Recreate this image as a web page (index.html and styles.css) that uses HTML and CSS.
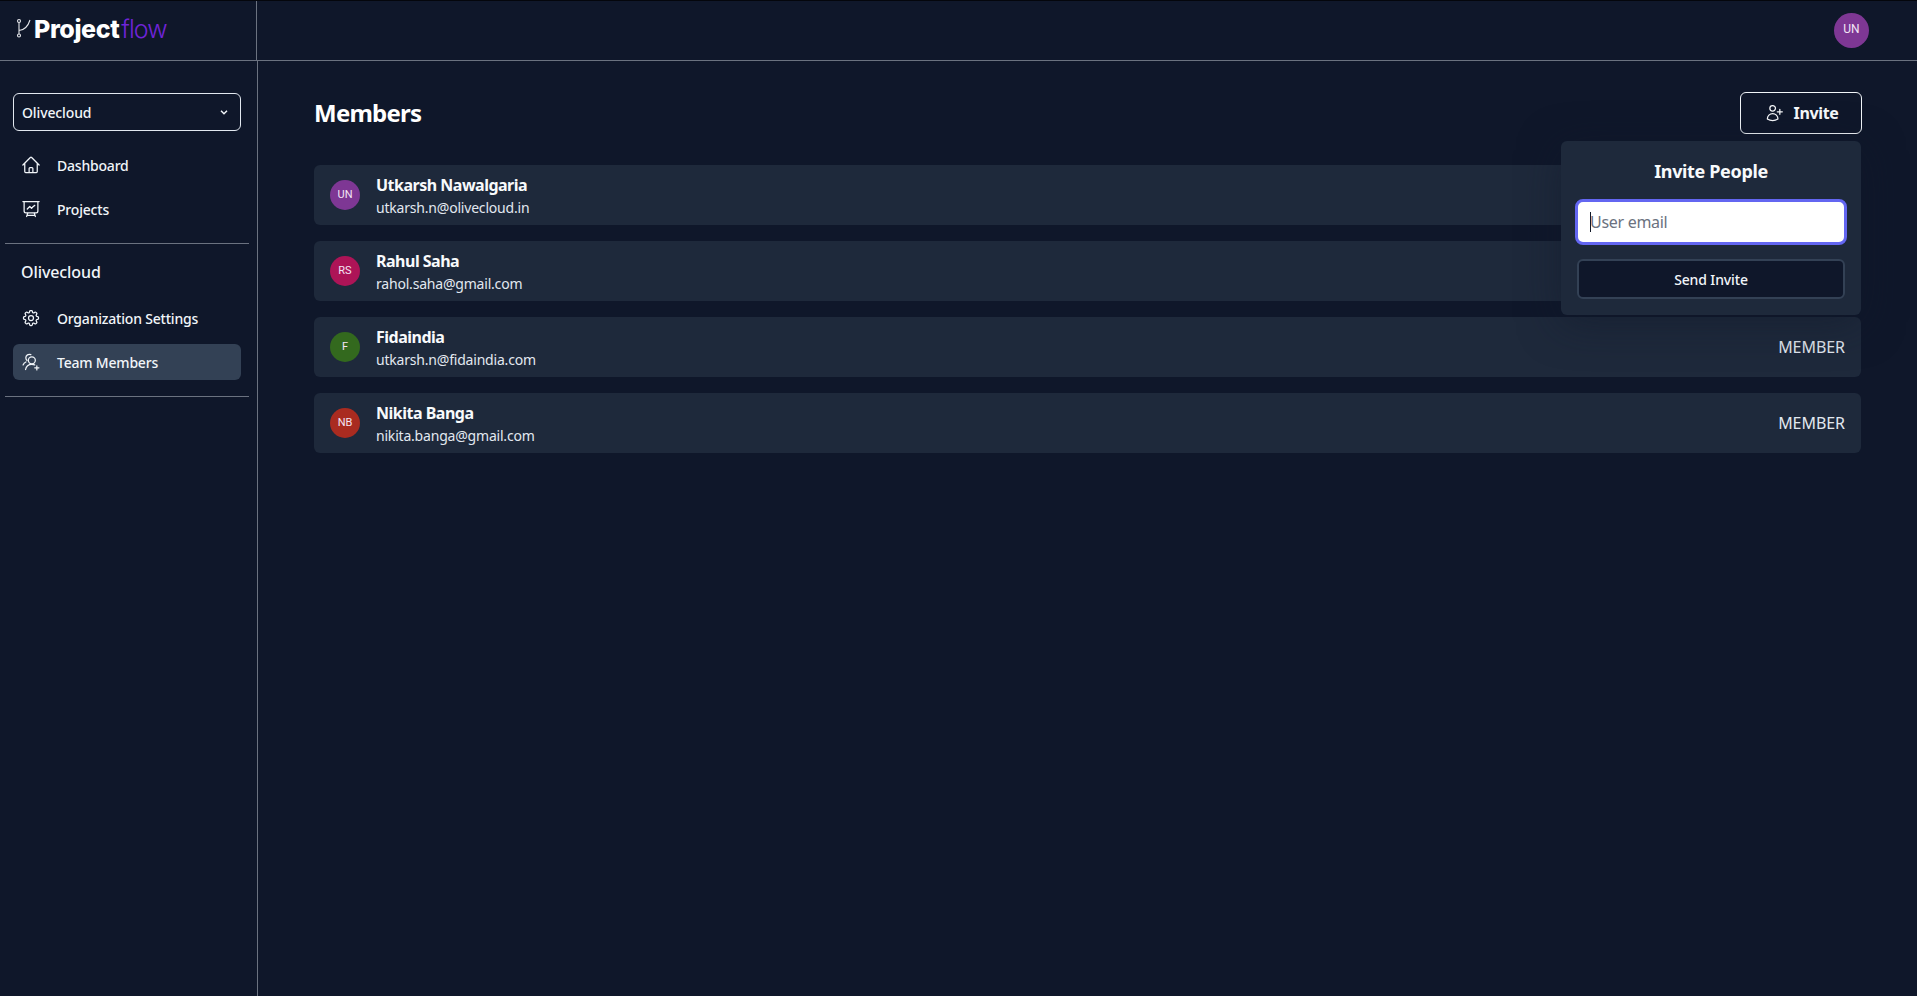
FILE: index.html
```html
<!DOCTYPE html>
<html lang="en">
<head>
<meta charset="utf-8">
<title>Members - Projectflow</title>
<link rel="stylesheet" href="styles.css">
</head>
<body>
<header class="topbar">
  <div class="brand">
    <svg class="brand-icon" viewBox="0 0 16 20" fill="none" stroke="currentColor" stroke-width="1.1"><circle cx="3" cy="3" r="1.5"/><circle cx="3" cy="17.5" r="1.5"/><path d="M3 4.5V16M3 12.500c5 -.5 9 -4 11-10.500"/></svg>
    <span class="brand-a">Project</span><span class="brand-b">flow</span>
  </div>
  <div class="topbar-right"><span class="avatar avatar-top purple">UN</span></div>
</header>
<div class="layout">
  <aside class="sidebar">
    <div class="select">Olivecloud
      <svg class="chev" viewBox="0 0 20 20" fill="none" stroke="currentColor" stroke-width="2.4"><path d="M5 8l5 5 5-5"/></svg>
    </div>
    <nav class="nav">
      <a class="nav-item"><svg class="nav-icon" viewBox="0 0 24 24" fill="none" stroke="currentColor" stroke-width="1.5" stroke-linecap="round" stroke-linejoin="round"><path d="M2.25 12l8.954-8.955c.44-.439 1.152-.439 1.591 0L21.75 12M4.5 9.75v10.125c0 .621.504 1.125 1.125 1.125H9.75v-4.875c0-.621.504-1.125 1.125-1.125h2.25c.621 0 1.125.504 1.125 1.125V21h4.125c.621 0 1.125-.504 1.125-1.125V9.75M8.25 21h8.25"/></svg>Dashboard</a>
      <a class="nav-item"><svg class="nav-icon" viewBox="0 0 24 24" fill="none" stroke="currentColor" stroke-width="1.5" stroke-linecap="round" stroke-linejoin="round"><path d="M3.75 3v11.25A2.25 2.25 0 006 16.5h2.25M3.75 3h-1.5m1.5 0h16.5m0 0h1.5m-1.5 0v11.25A2.25 2.25 0 0118 16.5h-2.25m-7.5 0h7.5m-7.5 0l-1 3m8.5-3l1 3m0 0l.5 1.5m-.5-1.5h-9.5m0 0l-.5 1.5m.75-9l3-3 2.148 2.148A12.061 12.061 0 0116.5 7.605"/></svg>Projects</a>
    </nav>
    <hr class="rule">
    <div class="org-name">Olivecloud</div>
    <nav class="nav">
      <a class="nav-item"><svg class="nav-icon" viewBox="0 0 24 24" fill="none" stroke="currentColor" stroke-width="1.5" stroke-linecap="round" stroke-linejoin="round"><path d="M10.343 3.94c.09-.542.56-.94 1.11-.94h1.093c.55 0 1.02.398 1.11.94l.149.894c.07.424.384.764.78.93.398.164.855.142 1.205-.108l.737-.527a1.125 1.125 0 011.45.12l.773.774c.39.389.44 1.002.12 1.45l-.527.737c-.25.35-.272.806-.107 1.204.165.397.505.71.93.78l.893.15c.543.09.94.56.94 1.109v1.094c0 .55-.397 1.02-.94 1.11l-.893.149c-.425.07-.765.383-.93.78-.165.398-.143.854.107 1.204l.527.738c.32.447.269 1.06-.12 1.45l-.774.773a1.125 1.125 0 01-1.449.12l-.738-.527c-.35-.25-.806-.272-1.203-.107-.397.165-.71.505-.781.929l-.149.894c-.09.542-.56.94-1.11.94h-1.094c-.55 0-1.019-.398-1.11-.94l-.148-.894c-.071-.424-.384-.764-.781-.93-.398-.164-.854-.142-1.204.108l-.738.527c-.447.32-1.06.269-1.45-.12l-.773-.774a1.125 1.125 0 01-.12-1.45l.527-.737c.25-.35.273-.806.108-1.204-.165-.397-.505-.71-.93-.78l-.894-.15c-.542-.09-.94-.56-.94-1.109v-1.094c0-.55.398-1.02.94-1.11l.894-.149c.424-.07.765-.383.93-.78.165-.398.143-.854-.107-1.204l-.527-.738a1.125 1.125 0 01.12-1.45l.773-.773a1.125 1.125 0 011.45-.12l.737.527c.35.25.807.272 1.204.107.397-.165.71-.505.78-.929l.15-.894z"/><path d="M15 12a3 3 0 11-6 0 3 3 0 016 0z"/></svg>Organization Settings</a>
      <a class="nav-item active"><svg class="nav-icon" viewBox="0 0 24 24" fill="none" stroke="currentColor" stroke-width="1.5" stroke-linecap="round" stroke-linejoin="round"><circle cx="13" cy="10" r="4.2"/><path d="M5.5 21c.6-3.8 3.6-6.3 7.5-6.3 1.3 0 2.4.3 3.4.8M19 16.5v5M16.5 19h5M11.8 3.2A4.2 4.2 0 0 0 5.8 7c0 1.3.5 2.4 1.4 3.2M2.500 15.500c.6-1.600 1.800-2.900 3.400-3.500"/></svg>Team Members</a>
    </nav>
    <hr class="rule">
  </aside>
  <main class="main">
    <div class="main-head">
      <h1 class="title">Members</h1>
      <button class="invite-btn" type="button"><svg class="invite-icon" viewBox="0 0 24 24" fill="none" stroke="currentColor" stroke-width="1.5" stroke-linecap="round" stroke-linejoin="round"><path d="M19 7.5v3m0 0v3m0-3h3m-3 0h-3m-2.25-4.125a3.375 3.375 0 11-6.75 0 3.375 3.375 0 016.75 0zM4 19.235v-.11a6.375 6.375 0 0112.75 0v.109A12.318 12.318 0 0110.374 21c-2.331 0-4.512-.645-6.374-1.766z"/></svg>Invite</button>
      <div class="popover">
        <div class="popover-title">Invite People</div>
        <div class="fake-input"><span class="caret"></span>User email</div>
        <button class="send-btn" type="button">Send Invite</button>
      </div>
    </div>
    <ul class="members">
      <li class="member"><span class="avatar purple">UN</span><div class="info"><div class="name">Utkarsh Nawalgaria</div><div class="email">utkarsh.n@olivecloud.in</div></div><span class="role">OWNER</span></li>
      <li class="member"><span class="avatar pink">RS</span><div class="info"><div class="name">Rahul Saha</div><div class="email">rahol.saha@gmail.com</div></div><span class="role">MEMBER</span></li>
      <li class="member"><span class="avatar green">F</span><div class="info"><div class="name">Fidaindia</div><div class="email">utkarsh.n@fidaindia.com</div></div><span class="role">MEMBER</span></li>
      <li class="member"><span class="avatar red">NB</span><div class="info"><div class="name">Nikita Banga</div><div class="email">nikita.banga@gmail.com</div></div><span class="role">MEMBER</span></li>
    </ul>
  </main>
</div>
</body>
</html>
```
FILE: styles.css
```css
* { box-sizing: border-box; }
html, body { height: 100%; }
body {
  margin: 0;
  background: #0f172a;
  color: #f1f5f9;
  font-family: "Noto Sans", "Liberation Sans", sans-serif;
  display: flex;
  flex-direction: column;
  overflow: hidden;
}
.topbar {
  height: 61px;
  flex: none;
  display: flex;
  border-top: 1px solid #04060c;
  border-bottom: 1px solid #6b7280;
}
.brand {
  width: 257px;
  border-right: 1px solid #6b7280;
  display: flex;
  align-items: center;
  padding: 0 0 4px 16px;
}
.brand-icon { width: 16px; height: 20px; color: #e5e7eb; margin-right: 2px; margin-top: -2px; flex: none; }
.brand-a { font-family: Inter, sans-serif; font-weight: 800; font-size: 25px; letter-spacing: -0.4px; color: #fff; }
.brand-b { font-family: Inter, sans-serif; font-weight: 300; font-size: 25px; letter-spacing: -1px; color: #7024d8; margin-left: 2px; }
.topbar-right { flex: 1; display: flex; justify-content: flex-end; align-items: center; padding: 0 48px 0 0; }
.layout { flex: 1; display: flex; min-height: 0; }
.sidebar {
  width: 258px;
  flex: none;
  border-right: 1px solid #6b7280;
  padding: 32px 7px 0 5px;
}
.select {
  margin: 0 0 0 8px;
  width: 228px;
  height: 38px;
  border: 1px solid #e2e8f0;
  border-radius: 6px;
  display: flex;
  align-items: center;
  justify-content: space-between;
  padding: 0 10px 0 8px;
  font-size: 14px;
  font-weight: 500;
  letter-spacing: -0.12px;
}
.chev { width: 12px; height: 12px; }
.nav { display: flex; flex-direction: column; gap: 8px; margin-top: 16px; }
.nav-item {
  display: flex;
  align-items: center;
  margin-left: 8px;
  width: 228px;
  height: 36px;
  padding-left: 8px;
  border-radius: 6px;
  font-size: 14px;
  font-weight: 500;
  letter-spacing: -0.2px;
}
.nav-item.active { background: #334155; }
.nav-icon { width: 20px; height: 20px; margin-right: 16px; flex: none; }
.rule { border: 0; border-top: 1px solid #6b7280; margin: 16px 0 0; width: 244px; }
.org-name { font-size: 16px; font-weight: 500; margin: 16px 0 0 16px; line-height: 24px; letter-spacing: -0.1px; }
.org-name + .nav { margin-top: 16px; }
.main { flex: 1; padding: 31px 56px 0 56px; min-width: 0; }
.main-head {
  position: relative;
  display: flex;
  justify-content: space-between;
  align-items: center;
  height: 42px;
}
.title { margin: 0; font-size: 24px; line-height: 32px; font-weight: 700; color: #fff; letter-spacing: -0.75px; }
.invite-btn {
  width: 122px;
  height: 42px;
  margin-right: -1px;
  background: transparent;
  border: 1px solid #f1f5f9;
  border-radius: 6px;
  color: #f8fafc;
  font: 700 16px "Noto Sans", sans-serif;
  letter-spacing: -0.35px;
  display: flex;
  align-items: center;
  justify-content: center;
  gap: 10px;
}
.invite-icon { width: 20px; height: 20px; }
.popover {
  position: absolute;
  top: 49px;
  right: 0;
  width: 300px;
  height: 174px;
  background: #1e293b;
  border-radius: 6px;
  box-shadow: 0 8px 40px rgba(15, 23, 42, 0.5);
  padding: 16px 14px 0;
  z-index: 2;
  text-align: center;
}
.popover-title { font-size: 18px; line-height: 28px; font-weight: 700; color: #f8fafc; letter-spacing: -0.35px; }
.fake-input {
  height: 46px;
  margin-top: 14px;
  background: #fff;
  border: 3px solid #6366f1;
  border-radius: 8px;
  color: #6b7280;
  font-size: 16px;
  letter-spacing: -0.3px;
  display: flex;
  align-items: center;
  padding-left: 12px;
}
.caret { width: 1px; height: 20px; background: #111827; margin-right: -1px; }
.send-btn {
  display: block;
  width: 268px;
  height: 40px;
  margin: 14px auto 0;
  background: #0f172a;
  border: 2px solid #334155;
  border-radius: 6px;
  color: #f1f5f9;
  font: 500 14px "Noto Sans", sans-serif;
  letter-spacing: -0.13px;
}
.members { list-style: none; margin: 31px 0 0; padding: 0; display: flex; flex-direction: column; gap: 16px; }
.member {
  height: 60px;
  background: #1e293b;
  border-radius: 6px;
  display: flex;
  align-items: center;
  padding: 0 16px;
}
.avatar {
  width: 30px;
  height: 30px;
  border-radius: 50%;
  flex: none;
  display: flex;
  align-items: center;
  justify-content: center;
  font: 400 11px Roboto, sans-serif;
  color: #f3e5f5;
  padding-bottom: 1px;
}
.avatar-top { width: 35px; height: 35px; font-size: 12px; padding-bottom: 3px; }
.purple { background: #7e3794; }
.pink { background: #ad1457; }
.green { background: #33691e; }
.red { background: #a92b20; }
.info { margin-left: 16px; flex: 1; padding-top: 2px; }
.name { font-size: 16px; line-height: 23px; font-weight: 700; color: #f8fafc; letter-spacing: -0.5px; }
.email { font-size: 14px; line-height: 22px; color: #e2e8f0; letter-spacing: -0.2px; }
.role { font-size: 16px; color: #e2e8f0; letter-spacing: -0.05px; }
```
